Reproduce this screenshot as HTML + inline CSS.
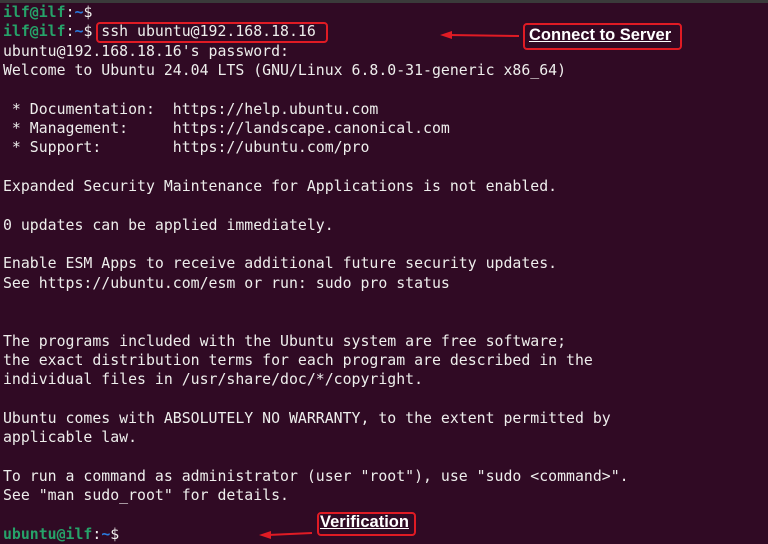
<!DOCTYPE html>
<html><head><style>
html,body{margin:0;padding:0;}
body{width:768px;height:543px;background:#300a24;position:relative;overflow:hidden;}
.top{position:absolute;left:0;top:0;width:768px;height:3px;background:#3a3a3a;}
pre{position:absolute;left:3px;top:3px;margin:0;font-family:"DejaVu Sans Mono","Liberation Mono",monospace;font-size:14.85px;line-height:19.33px;color:#eeeeec;}
.g{color:#26a269;font-weight:bold;}
.b{color:#2a7bde;font-weight:bold;}
.box{position:absolute;border:2px solid #e01b24;border-radius:4px;}
.lbl{position:absolute;font-family:"Liberation Sans",Arial,sans-serif;font-weight:bold;color:#fff;text-decoration:underline;font-size:16.5px;}
</style></head><body>
<div class="top"></div>
<pre><span class="g">ilf@ilf</span>:<span class="b">~</span>$
<span class="g">ilf@ilf</span>:<span class="b">~</span>$ ssh ubuntu@192.168.18.16
ubuntu@192.168.18.16's password:
Welcome to Ubuntu 24.04 LTS (GNU/Linux 6.8.0-31-generic x86_64)

 * Documentation:  https://help.ubuntu.com
 * Management:     https://landscape.canonical.com
 * Support:        https://ubuntu.com/pro

Expanded Security Maintenance for Applications is not enabled.

0 updates can be applied immediately.

Enable ESM Apps to receive additional future security updates.
See https://ubuntu.com/esm or run: sudo pro status


The programs included with the Ubuntu system are free software;
the exact distribution terms for each program are described in the
individual files in /usr/share/doc/*/copyright.

Ubuntu comes with ABSOLUTELY NO WARRANTY, to the extent permitted by
applicable law.

To run a command as administrator (user "root"), use "sudo &lt;command&gt;".
See "man sudo_root" for details.

<span class="g">ubuntu@ilf</span>:<span class="b">~</span>$</pre>
<div class="box" style="left:96px;top:22px;width:228px;height:17px;"></div>
<div class="box" style="left:523px;top:23px;width:155px;height:23px;"></div>
<div class="lbl" style="left:529px;top:26px;">Connect to Server</div>
<div class="box" style="left:317px;top:512px;width:95px;height:20px;"></div>
<div class="lbl" style="left:320px;top:513px;">Verification</div>
<svg style="position:absolute;left:0;top:0" width="768" height="543">
<line x1="519" y1="36" x2="448" y2="35" stroke="#e01b24" stroke-width="2"/>
<polygon points="440,35 452,31 452,39" fill="#e01b24"/>
<line x1="312" y1="533" x2="268" y2="535" stroke="#e01b24" stroke-width="2"/>
<polygon points="259,535 271,531 271,539" fill="#e01b24"/>
</svg>
</body></html>
